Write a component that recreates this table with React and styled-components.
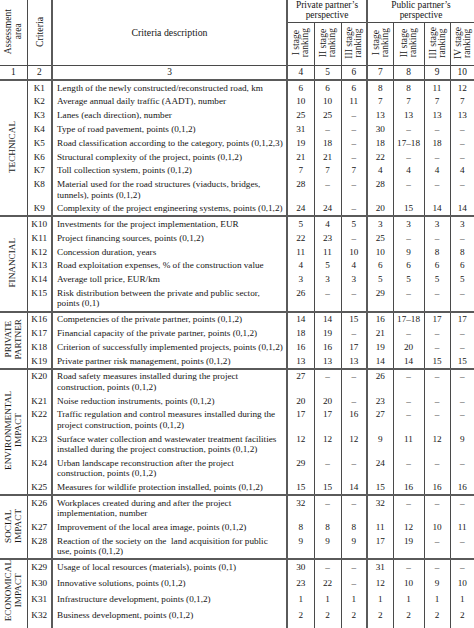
import React from 'react';
import styled, { createGlobalStyle, css } from 'styled-components';

const GlobalStyle = createGlobalStyle`
  html, body {
    margin: 0;
    padding: 0;
    background: #ffffff;
  }
  body {
    font-family: "Liberation Serif", "Times New Roman", serif;
    color: #161616;
  }
`;

const WIDTHS = [27, 25, 235, 27, 27, 26, 26, 31, 26, 24];
const THIN = '1px solid #4a4a4a';
const THICK = '2px solid #5a5a5a';

const sections = [
  {
    area: ['TECHNICAL'],
    rows: [
      ['K1', ['Length of the newly constructed/reconstructed road, km'], ['6', '6', '6', '8', '8', '11', '12']],
      ['K2', ['Average annual daily traffic (AADT), number'], ['10', '10', '11', '7', '7', '7', '7']],
      ['K3', ['Lanes (each direction), number'], ['25', '25', '–', '13', '13', '13', '13']],
      ['K4', ['Type of road pavement, points (0,1,2)'], ['31', '–', '–', '30', '–', '–', '–']],
      ['K5', ['Road classification according to the category, points (0,1,2,3)'], ['19', '18', '–', '18', '17–18', '18', '–']],
      ['K6', ['Structural complexity of the project, points (0,1,2)'], ['21', '21', '–', '22', '–', '–', '–']],
      ['K7', ['Toll collection system, points (0,1,2)'], ['7', '7', '7', '4', '4', '4', '4']],
      ['K8', ['Material used for the road structures (viaducts, bridges,', 'tunnels), points (0,1,2)'], ['28', '–', '–', '28', '–', '–', '–']],
      ['K9', ['Complexity of the project engineering systems, points (0,1,2)'], ['24', '24', '–', '20', '15', '14', '14']],
    ],
  },
  {
    area: ['FINANCIAL'],
    rows: [
      ['K10', ['Investments for the project implementation, EUR'], ['5', '4', '5', '3', '3', '3', '3']],
      ['K11', ['Project financing sources, points (0,1,2)'], ['22', '23', '–', '25', '–', '–', '–']],
      ['K12', ['Concession duration, years'], ['11', '11', '10', '10', '9', '8', '8']],
      ['K13', ['Road exploitation expenses, % of the construction value'], ['4', '5', '4', '6', '6', '6', '6']],
      ['K14', ['Average toll price, EUR/km'], ['3', '3', '3', '5', '5', '5', '5']],
      ['K15', ['Risk distribution between the private and public sector,', 'points (0,1)'], ['26', '–', '–', '29', '–', '–', '–']],
    ],
  },
  {
    area: ['PRIVATE', 'PARTNER'],
    rows: [
      ['K16', ['Competencies of the private partner, points (0,1,2)'], ['14', '14', '15', '16', '17–18', '17', '17']],
      ['K17', ['Financial capacity of the private partner, points (0,1,2)'], ['18', '19', '–', '21', '–', '–', '–']],
      ['K18', ['Criterion of successfully implemented projects, points (0,1,2)'], ['16', '16', '17', '19', '20', '–', '–']],
      ['K19', ['Private partner risk management, points (0,1,2)'], ['13', '13', '13', '14', '14', '15', '15']],
    ],
  },
  {
    area: ['ENVIRONMENTAL', 'IMPACT'],
    rows: [
      ['K20', ['Road safety measures installed during the project', 'construction, points (0,1,2)'], ['27', '–', '–', '26', '–', '–', '–']],
      ['K21', ['Noise reduction instruments, points (0,1,2)'], ['20', '20', '–', '23', '–', '–', '–']],
      ['K22', ['Traffic regulation and control measures installed during the', 'project construction, points (0,1,2)'], ['17', '17', '16', '27', '–', '–', '–']],
      ['K23', ['Surface water collection and wastewater treatment facilities', 'installed during the project construction, points (0,1,2)'], ['12', '12', '12', '9', '11', '12', '9']],
      ['K24', ['Urban landscape reconstruction after the project', 'construction, points (0,1,2)'], ['29', '–', '–', '24', '–', '–', '–']],
      ['K25', ['Measures for wildlife protection installed, points (0,1,2)'], ['15', '15', '14', '15', '16', '16', '16']],
    ],
  },
  {
    area: ['SOCIAL', 'IMPACT'],
    rows: [
      ['K26', ['Workplaces created during and after the project', 'implementation, number'], ['32', '–', '–', '32', '–', '–', '–']],
      ['K27', ['Improvement of the local area image, points (0,1,2)'], ['8', '8', '8', '11', '12', '10', '11']],
      ['K28', ['Reaction of the society on the  land acquisition for public', 'use, points (0,1,2)'], ['9', '9', '9', '17', '19', '–', '–']],
    ],
  },
  {
    area: ['ECONOMICAL', 'IMPACT'],
    rows: [
      ['K29', ['Usage of local resources (materials), points (0,1)'], ['30', '–', '–', '31', '–', '–', '–']],
      ['K30', ['Innovative solutions, points (0,1,2)'], ['23', '22', '–', '12', '10', '9', '10']],
      ['K31', ['Infrastructure development, points (0,1,2)'], ['1', '1', '1', '1', '1', '1', '1']],
      ['K32', ['Business development, points (0,1,2)'], ['2', '2', '2', '2', '2', '2', '2']],
    ],
  },
];

const stages = [
  ['I stage', 'ranking'],
  ['II stage', 'ranking'],
  ['III stage', 'ranking'],
  ['I stage', 'ranking'],
  ['II stage', 'ranking'],
  ['III stage', 'ranking'],
  ['IV stage', 'ranking'],
];

const Page = styled.div`
  width: 474px;
  height: 628px;
  overflow: hidden;
`;

const Sheet = styled.table`
  width: 474px;
  table-layout: fixed;
  border-collapse: collapse;
  font-size: 9.2px;
  line-height: 10.4px;
`;

const Col = styled.col`
  width: ${(p) => p.$w}px;
`;

// vertical separators: thin between stages, heavy at the group edges
const leftLine = (p) => {
  if (p.$edge === 'none') return 'none';
  if (p.$edge === 'thick') return THICK;
  return THIN;
};

const cellBase = css`
  padding: 0;
  border-left: ${leftLine};
  border-top: ${(p) => (p.$top ? THICK : 'none')};
`;

const HeadCell = styled.th`
  ${cellBase};
  font-weight: normal;
  text-align: center;
  vertical-align: middle;
  font-size: 9.8px;
  line-height: 10px;
  height: ${(p) => p.$h || 'auto'};
`;

const GroupHead = styled.th`
  ${cellBase};
  font-weight: normal;
  text-align: center;
  vertical-align: middle;
  font-size: 9.4px;
  line-height: 9.8px;
  height: 22px;
  border-bottom: ${THIN};
`;

const Turned = styled.span`
  display: inline-block;
  writing-mode: vertical-rl;
  transform: rotate(180deg);
  white-space: nowrap;
  text-align: center;
  font-size: ${(p) => p.$size || 9.2}px;
  line-height: ${(p) => p.$lh || 9.4}px;
`;

const IndexCell = styled.td`
  ${cellBase};
  text-align: center;
  height: 13px;
  border-top: ${THIN};
  border-bottom: ${THICK};
  font-size: 9.4px;
`;

const AreaCell = styled.td`
  ${cellBase};
  text-align: center;
  vertical-align: middle;
`;

const CodeCell = styled.td`
  ${cellBase};
  text-align: center;
  vertical-align: top;
  padding: 1.7px 0;
`;

const DescCell = styled.td`
  ${cellBase};
  text-align: left;
  vertical-align: top;
  padding: 1.7px 2px 1.7px 4px;
  white-space: pre;
`;

const ValueCell = styled.td`
  ${cellBase};
  text-align: center;
  vertical-align: top;
  padding: 1.7px 0;
`;

const Filler = styled.td`
  ${cellBase};
  height: 24px;
`;

const valueEdge = (i) => (i === 0 || i === 3 ? 'thick' : 'thin');

const Section = ({ area, rows }) =>
  rows.map(([code, lines, values], r) => (
    <tr key={code}>
      {r === 0 && (
        <AreaCell rowSpan={rows.length} $edge="none" $top>
          <Turned $size={9.2} $lh={9.6}>
            {area.map((a, i) => (
              <React.Fragment key={a}>
                {i > 0 && <br />}
                {a}
              </React.Fragment>
            ))}
          </Turned>
        </AreaCell>
      )}
      <CodeCell $edge="thin" $top={r === 0}>{code}</CodeCell>
      <DescCell $edge="thick" $top={r === 0}>{lines.join('\n')}</DescCell>
      {values.map((v, i) => (
        <ValueCell key={i} $edge={valueEdge(i)} $top={r === 0}>
          {v}
        </ValueCell>
      ))}
    </tr>
  ));

export default function App() {
  return (
    <Page>
      <GlobalStyle />
      <Sheet>
        <colgroup>
          {WIDTHS.map((w, i) => (
            <Col key={i} $w={w} />
          ))}
        </colgroup>
        <thead>
          <tr>
            <HeadCell rowSpan={2} $edge="none">
              <Turned $size={9.6} $lh={10}>
                Assessment
                <br />
                area
              </Turned>
            </HeadCell>
            <HeadCell rowSpan={2} $edge="thin">
              <Turned $size={9.8}>Criteria</Turned>
            </HeadCell>
            <HeadCell rowSpan={2} $edge="thick">
              Criteria description
            </HeadCell>
            <GroupHead colSpan={3} $edge="thick">
              Private partner’s
              <br />
              perspective
            </GroupHead>
            <GroupHead colSpan={4} $edge="thick">
              Public partner’s
              <br />
              perspective
            </GroupHead>
          </tr>
          <tr>
            {stages.map(([a, b], i) => (
              <HeadCell key={i} $edge={valueEdge(i)} $h="42px">
                <Turned $size={9.6} $lh={9.4}>
                  {a}
                  <br />
                  {b}
                </Turned>
              </HeadCell>
            ))}
          </tr>
          <tr>
            {WIDTHS.map((w, i) => (
              <IndexCell
                key={i}
                $edge={i === 0 ? 'none' : i === 1 ? 'thin' : i === 2 ? 'thick' : valueEdge(i - 3)}
              >
                {i + 1}
              </IndexCell>
            ))}
          </tr>
        </thead>
        <tbody>
          {sections.map((s) => (
            <Section key={s.area.join(' ')} {...s} />
          ))}
          <tr>
            <Filler $edge="none" />
            <Filler $edge="thin" />
            <Filler $edge="thick" />
            {stages.map((_, i) => (
              <Filler key={i} $edge={valueEdge(i)} />
            ))}
          </tr>
        </tbody>
      </Sheet>
    </Page>
  );
}
